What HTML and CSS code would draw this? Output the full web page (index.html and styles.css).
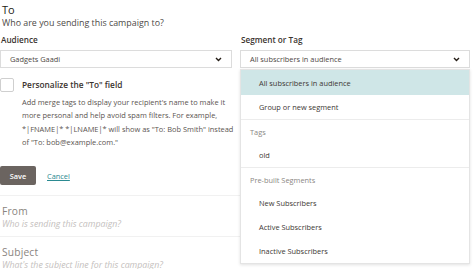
FILE: index.html
```html
<!DOCTYPE html>
<html>
<head>
<meta charset="utf-8">
<link rel="stylesheet" href="styles.css">
</head>
<body>
<div class="page">
  <section class="to">
    <h2 class="title">To</h2>
    <p class="subtitle">Who are you sending this campaign to?</p>
    <div class="fields">
      <div class="field">
        <div class="label">Audience</div>
        <div class="select"><span>Gadgets Gaadi</span><svg class="chev" width="7" height="5" viewBox="0 0 7 5"><path d="M1 1 L3.5 3.5 L6 1" fill="none" stroke="#241c15" stroke-width="1.4"/></svg></div>
      </div>
      <div class="field seg">
        <div class="label">Segment or Tag</div>
        <div class="select"><span>All subscribers in audience</span><svg class="chev" width="7" height="5" viewBox="0 0 7 5"><path d="M1 1 L3.5 3.5 L6 1" fill="none" stroke="#241c15" stroke-width="1.4"/></svg></div>
        <ul class="dropdown">
          <li class="opt active">All subscribers in audience</li>
          <li class="opt">Group or new segment</li>
          <li class="group">Tags</li>
          <li class="opt">old</li>
          <li class="group">Pre-built Segments</li>
          <li class="opt">New Subscribers</li>
          <li class="opt">Active Subscribers</li>
          <li class="opt">Inactive Subscribers</li>
        </ul>
      </div>
    </div>
    <div class="personalize">
      <span class="checkbox"></span>
      <div class="pbody">
        <div class="plabel">Personalize the "To" field</div>
        <p class="phelp">Add merge tags to display your recipient's name to make it more personal and help avoid spam filters. For example, *|FNAME|* *|LNAME|* will show as "To: Bob Smith" instead of "To: bob@example.com."</p>
      </div>
    </div>
    <div class="actions">
      <button class="save">Save</button>
      <a class="cancel" href="#">Cancel</a>
    </div>
  </section>
  <section class="collapsed">
    <h3 class="ctitle">From</h3>
    <p class="chint">Who is sending this campaign?</p>
  </section>
  <section class="collapsed">
    <h3 class="ctitle">Subject</h3>
    <p class="chint">What's the subject line for this campaign?</p>
  </section>
</div>
</body>
</html>
```

FILE: styles.css
```css
* { box-sizing: border-box; }
html, body { margin: 0; padding: 0; background: #fff; }
body { font-family: "Open Sans", "Liberation Sans", sans-serif; color: #241c15; overflow: hidden; }
.page { width: 474px; padding: 0 4px 0 0; }
.to { padding-top: 2px; }
.title { margin: 0 0 0 2px; font-size: 11px; font-weight: 400; line-height: 15px; }
.subtitle { margin: 0 0 0 2px; font-size: 8.9px; line-height: 12px; color: #4e4a47; }
.fields { display: grid; grid-template-columns: 232px 230px; column-gap: 8px; margin-top: 5px; }
.field { position: relative; }
.label { font-size: 8.2px; font-weight: 600; line-height: 12px; margin-left: 1px; color: #3a332e; }
.select { margin-top: 4px; height: 18px; border: 1px solid #dcdcdc; display: flex; align-items: center; justify-content: space-between; padding: 0 9px 0 9px; font-size: 7.4px; color: #4e4844; background: #fff; }
.chev { display: block; }
.dropdown { position: absolute; left: 0; top: 35px; width: 230px; margin: 0; padding: 0; list-style: none; background: #fff; border: 1px solid #e4e4e4; box-shadow: 0 1px 3px rgba(0,0,0,0.12); z-index: 2; }
.dropdown li { height: 24px; display: flex; align-items: center; font-size: 7.4px; }
.opt { padding-left: 18px; color: #3d3733; }
.opt.active { background: #cfe6e7; height: 25px; }
.group { padding-left: 9px; color: #8b8784; font-size: 7px; border-top: 1px solid #ececec; }
.personalize { display: flex; margin-top: 10px; width: 232px; }
.checkbox { width: 14px; height: 14px; border: 1px solid #cfcfcf; border-radius: 2px; flex: none; background: #fff; }
.pbody { margin-left: 8px; }
.plabel { font-size: 8.3px; font-weight: 600; line-height: 14px; color: #3a332e; }
.phelp { margin: 4px 0 0; font-size: 7.45px; line-height: 13.3px; color: #5a5450; width: 216px; }
.actions { display: flex; align-items: center; margin-top: 17px; padding-bottom: 10px; border-bottom: 1px solid #f1f1f1; }
.save { height: 19px; width: 36px; padding: 0; border: 0; border-radius: 2px; background: #6b6460; color: #fff; font-family: inherit; font-size: 7.4px; font-weight: 600; }
.cancel { margin-left: 11px; font-size: 7.4px; color: #2b8a91; text-decoration: underline; }
.collapsed { padding: 8px 0 6px 2px; border-bottom: 1px solid #f1f1f1; width: 240px; }
.ctitle { margin: 0; font-size: 10.2px; font-weight: 400; line-height: 14px; color: #8a8480; letter-spacing: 0.2px; }
.chint { margin: 0; font-size: 8.8px; line-height: 12px; font-style: italic; color: #c4c0bd; }
```
